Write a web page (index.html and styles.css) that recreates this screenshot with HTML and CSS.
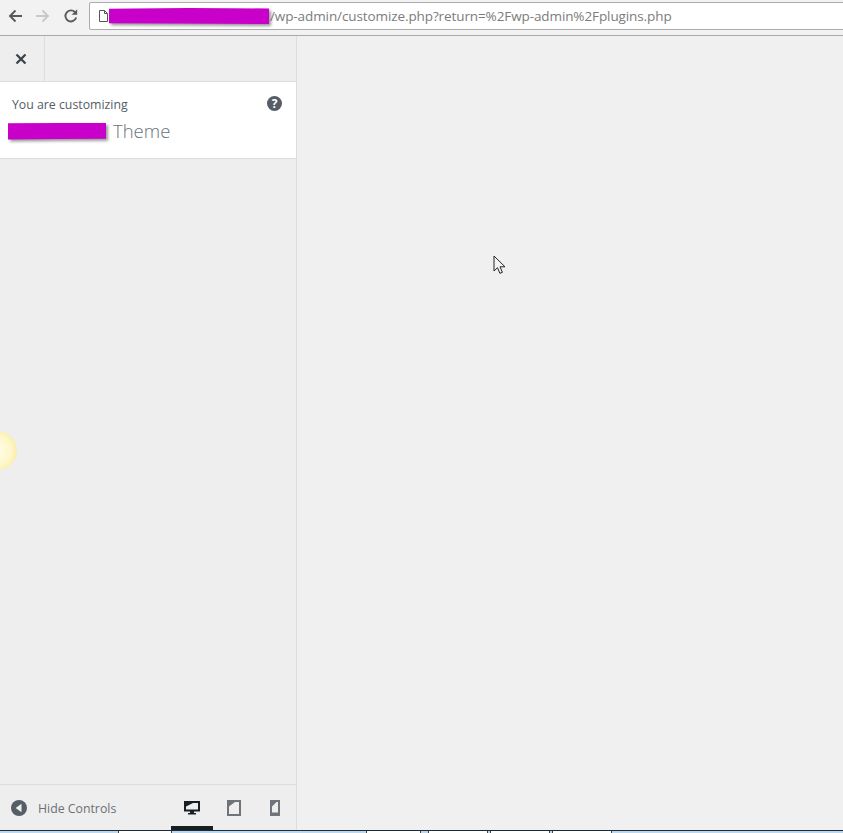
FILE: index.html
```html
<!DOCTYPE html>
<html lang="en">
<head>
<meta charset="utf-8">
<title>Customize</title>
<link rel="stylesheet" href="styles.css">
</head>
<body>
<header class="toolbar">
  <svg class="nav-icon back" viewBox="0 0 16 16"><path d="M15 8H3M8.500 2.500 3 8l5.500 5.500"/></svg>
  <svg class="nav-icon forward" viewBox="0 0 16 16"><path d="M1 8h12M7.500 2.500 13 8l-5.500 5.500"/></svg>
  <svg class="nav-icon reload" viewBox="0 0 16 16"><path d="M13.200 9.500A5.500 5.500 0 1 1 12 4.200"/><path class="fill" d="M14.200 1.200v5.600H8.600z"/></svg>
  <div class="address">
    <svg class="page-icon" viewBox="0 0 9 12"><path d="M.5.500h5l3 3v8h-8zM5.500.500v3h3"/></svg>
    <span class="redact redact-url"><span class="redact-ink"></span></span>
    <span class="url">/wp-admin/customize.php?return=%2Fwp-admin%2Fplugins.php</span>
  </div>
</header>
<main class="main">
  <aside class="sidebar">
    <div class="panel-head">
      <button class="close" type="button" aria-label="Close">
        <svg viewBox="0 0 12 12"><path d="M1.500 1.500l9 9M10.500 1.500l-9 9"/></svg>
      </button>
    </div>
    <section class="info">
      <div class="info-text">
        <span class="info-label">You are customizing</span>
        <div class="info-title"><span class="redact redact-title"><span class="redact-ink"></span></span><span>Theme</span></div>
      </div>
      <span class="help">?</span>
    </section>
    <div class="spacer"></div>
    <footer class="panel-foot">
      <button class="hide" type="button">
        <svg class="hide-icon" viewBox="0 0 16 16"><circle cx="8" cy="8" r="8"/><path d="M10.500 3.800v8.400L4.600 8z"/></svg>
        <span>Hide Controls</span>
      </button>
      <div class="devices">
        <div class="device active">
          <svg viewBox="0 0 16 16"><path class="solid" d="M0 1h16v10.500H10v1.500h2v1.500H4V13h2v-1.500H0z"/><path class="cut" d="M2 3h12v6.500H2z"/><path class="solid" d="M2 6.500 9 3H2z"/></svg>
        </div>
        <div class="device">
          <svg viewBox="0 0 16 16"><path class="solid" d="M1 0h14v16H1z"/><path class="cut" d="M3 2h10v12H3z"/><path class="solid" d="M3 6.500 9 2H3z"/></svg>
        </div>
        <div class="device">
          <svg viewBox="0 0 16 16"><path class="solid" d="M3 0h10v16H3z"/><path class="cut" d="M5 2h6v10.500H5z"/><path class="solid" d="M5 6.500 9.500 2H5z"/></svg>
        </div>
      </div>
    </footer>
  </aside>
  <div class="preview"></div>
</main>
<div class="taskbar">
  <span class="seg s1"></span><span class="tab t1"></span><span class="seg s2"></span><span class="tab t2"></span><span class="seg s3"></span><span class="tab t3"></span><span class="seg s4"></span><span class="tab t4"></span><span class="seg s5"></span><span class="tab t5"></span><span class="seg s6"></span>
</div>
<div class="orb"></div>
<svg class="cursor" viewBox="0 0 13 20"><path d="M1 1v15l3.500-3.300 2.400 5.600 2.500-1-2.400-5.500h5z"/></svg>
</body>
</html>
```

FILE: styles.css
```css
* { box-sizing: border-box; }
html, body { height: 100%; }
body {
  margin: 0;
  height: 833px;
  overflow: hidden;
  position: relative;
  display: flex;
  flex-direction: column;
  background: #f0f0f0;
  font-family: "Open Sans", "Noto Sans", sans-serif;
  color: #555d66;
}
.toolbar {
  height: 36px;
  flex: none;
  display: flex;
  align-items: center;
  padding: 0 0 3px 7px;
  background: #f2f2f2;
  border-bottom: 1px solid #aaa;
}
.nav-icon {
  width: 16px;
  height: 16px;
  flex: none;
  margin-right: 12px;
  fill: none;
  stroke: #5a5a5a;
  stroke-width: 1.9;
}
.nav-icon .fill { fill: #5a5a5a; stroke: none; }
.forward { stroke: #c9c9c9; }
.reload { margin-right: 10px; }
.address {
  flex: 1;
  height: 28px;
  margin-right: -10px;
  display: flex;
  align-items: center;
  padding-left: 9px;
  background: #fff;
  border: 1px solid #ababab;
  border-radius: 2px;
}
.page-icon {
  width: 9px;
  height: 12px;
  flex: none;
  fill: none;
  stroke: #555;
  stroke-width: 1;
}
.redact {
  display: block;
  flex: none;
  filter: drop-shadow(2px 2px 1.500px rgba(80, 80, 80, .6));
}
.redact-ink { display: block; width: 100%; height: 100%; background: #c900c9; }
.redact-url { width: 160px; height: 16px; margin: 0 1px; }
.redact-url .redact-ink { clip-path: polygon(0 4%, 50% 0, 100% 3%, 100% 100%, 40% 97%, 0 96%); }
.url {
  font-size: 13.500px;
  letter-spacing: -.1px;
  color: #7c7c7c;
  white-space: nowrap;
}
.main { flex: 1; display: flex; min-height: 0; }
.sidebar {
  width: 297px;
  flex: none;
  display: flex;
  flex-direction: column;
  background: #eee;
  border-right: 1px solid #ddd;
}
.panel-head { height: 46px; flex: none; border-bottom: 1px solid #ddd; display: flex; }
.close {
  width: 45px;
  padding: 0 2px 0 0;
  display: flex;
  align-items: center;
  justify-content: center;
  background: none;
  border: 0;
  border-right: 1px solid #ddd;
}
.close svg { width: 12px; height: 12px; fill: none; stroke: #3c434a; stroke-width: 2.300; }
.info {
  height: 77px;
  flex: none;
  display: flex;
  justify-content: space-between;
  padding: 14px 14px 0 0;
  background: #fff;
  border-bottom: 1px solid #ddd;
}
.info-label { display: block; padding-left: 12px; font-size: 12.300px; line-height: 18px; }
.info-title {
  display: flex;
  align-items: center;
  gap: 7px;
  padding: 5px 0 0 8px;
  font-size: 18.500px;
  font-weight: 300;
  line-height: 24px;
  color: #6b7279;
}
.redact-title { width: 98px; height: 17px; }
.redact-title .redact-ink { clip-path: polygon(0 5%, 55% 3%, 100% 0, 100% 95%, 50% 97%, 0 100%); }
.help {
  width: 15px;
  height: 15px;
  border-radius: 50%;
  background: #555d66;
  color: #fff;
  font-size: 12px;
  font-weight: 700;
  line-height: 15px;
  text-align: center;
}
.spacer { flex: 1; }
.panel-foot {
  height: 46px;
  flex: none;
  display: flex;
  justify-content: space-between;
  border-top: 1px solid #ddd;
}
.hide {
  display: flex;
  align-items: center;
  gap: 11px;
  height: 46px;
  padding: 0 0 0 11px;
  background: none;
  border: 0;
  font: inherit;
  font-size: 12.300px;
  color: #6b7075;
}
.hide-icon { width: 16px; height: 16px; fill: #555d66; }
.hide-icon path { fill: #eee; }
.devices { display: flex; width: 125px; }
.device {
  flex: 1;
  height: 45px;
  padding-top: 5px;
  display: flex;
  align-items: center;
  justify-content: center;
  border-bottom: 4px solid transparent;
}
.device svg { width: 16px; height: 16px; }
.device .solid { fill: #6e7479; }
.device .cut { fill: #eee; }
.device.active { border-bottom-color: #191e23; }
.device.active .solid { fill: #191e23; }
.preview { flex: 1; background: #f0f0f0; }
.taskbar {
  height: 3px;
  flex: none;
  display: flex;
  border-top: 1px solid #1c2a38;
}
.seg { background: #bcd8ee; }
.tab { background: #fff; border-left: 1px solid #444; border-right: 1px solid #444; }
.s1 { width: 118px; }
.t1 { width: 54px; }
.s2 { width: 194px; }
.t2 { width: 55px; }
.s3 { width: 7px; }
.t3 { width: 60px; }
.s4 { width: 2px; }
.t4 { width: 60px; }
.s5 { width: 2px; }
.t5 { width: 60px; }
.s6 { flex: 1; }
.orb {
  position: absolute;
  left: -22px;
  top: 431px;
  width: 39px;
  height: 39px;
  border-radius: 50%;
  background: radial-gradient(circle at 45% 50%, #fffff0 0, #fdf6c8 55%, #fae896 85%, #f3d975 100%);
}
.cursor {
  position: absolute;
  left: 493px;
  top: 255px;
  width: 13px;
  height: 20px;
  fill: #f4f4f4;
  stroke: #24242c;
  stroke-width: 1;
}
```
